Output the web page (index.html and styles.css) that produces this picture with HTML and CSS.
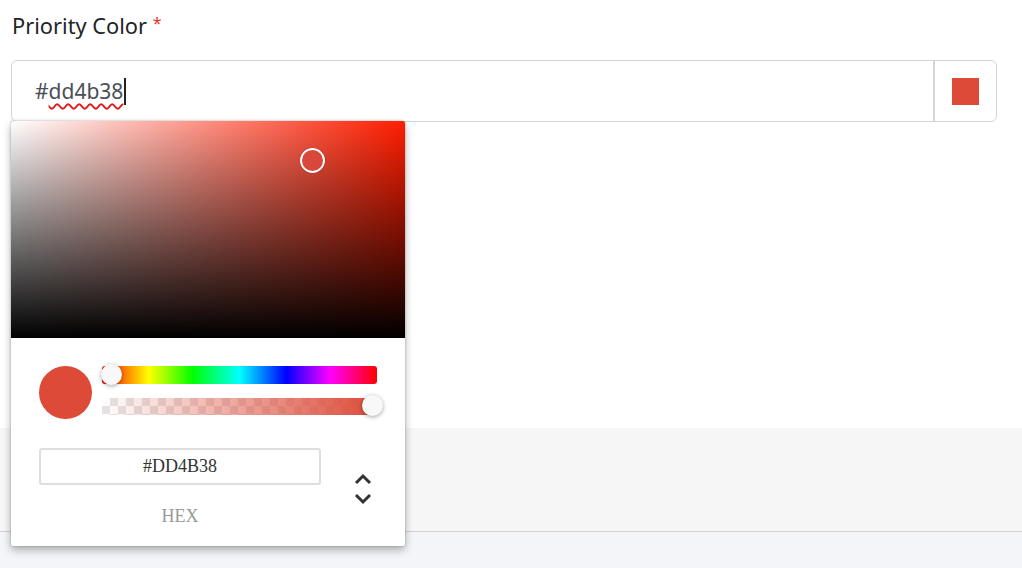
FILE: index.html
```html
<!DOCTYPE html>
<html lang="en">
<head>
  <meta charset="UTF-8" />
  <title>Priority Color</title>
  <link rel="stylesheet" href="styles.css">
</head>
<body>

  <div class="card">
    <div class="card-body">
      <label class="field-label" for="color">Priority Color <span class="req">*</span></label>
      <div class="input-group">
        <div class="color-input"><span class="typed">#<span class="misspelled">dd4b38</span></span><span class="caret"></span></div>
        <div class="addon"><span class="swatch"></span></div>
      </div>
    </div>
    <div class="card-footer"></div>
  </div>

  <div class="picker">
    <div class="saturation">
      <div class="sat-white"></div>
      <div class="sat-black"></div>
      <span class="sat-thumb"></span>
    </div>
    <div class="controls">
      <div class="slider-row">
        <div class="preview"></div>
        <div class="sliders">
          <div class="hue">
            <span class="thumb hue-thumb"></span>
          </div>
          <div class="alpha">
            <div class="alpha-fill"></div>
            <span class="thumb alpha-thumb"></span>
          </div>
        </div>
      </div>
      <div class="field-row">
        <div class="hex-field">
          <div class="hex-box">#DD4B38</div>
          <div class="hex-label">HEX</div>
        </div>
        <div class="toggle">
          <svg width="18" height="34" viewBox="0 0 18 34">
            <path d="M2 11 L9 4 L16 11" fill="none" stroke="#333" stroke-width="3" />
            <path d="M2 23 L9 30 L16 23" fill="none" stroke="#333" stroke-width="3" />
          </svg>
        </div>
      </div>
    </div>
  </div>

</body>
</html>
```

FILE: styles.css
```css
body {
  margin: 0;
  background: #f4f5f9;
  font-family: "Noto Sans", "Open Sans", sans-serif;
}

.card {
  background: #fff;
  border-bottom: 1px solid #cfcfd4;
  box-shadow: 0 2px 6px rgba(0,0,0,0.06);
}

.card-body {
  height: 428px;
  padding: 0 25px 0 11px;
  box-sizing: border-box;
}

.field-label {
  display: block;
  padding: 8px 0 0 1px;
  height: 60px;
  box-sizing: border-box;
  font-size: 21.8px;
  line-height: 30px;
  color: #1f2428;
}

.req {
  color: #e5322d;
  font-size: 16px;
  vertical-align: 5px;
}

.input-group {
  display: flex;
  height: 62px;
  box-sizing: border-box;
  border: 1px solid #d2d5db;
  border-radius: 6px;
}

.color-input {
  flex: 1;
  display: flex;
  align-items: center;
  padding-left: 23px;
  font-size: 21px;
  color: #4a5057;
}

.misspelled {
  text-decoration: underline wavy #e01b1b;
  text-decoration-thickness: 1.5px;
  text-underline-offset: 4px;
}

.caret {
  display: inline-block;
  width: 2px;
  height: 27px;
  background: #222;
  margin-left: 1px;
}

.addon {
  width: 61px;
  border-left: 2px solid #d2d5db;
  display: flex;
  align-items: center;
  justify-content: center;
}

.swatch {
  width: 27px;
  height: 27px;
  background: #dd4b38;
}

.picker {
  position: absolute;
  top: 121px;
  left: 11px;
  width: 394px;
  height: 425px;
  background: #fff;
  box-shadow: 0 0 2px rgba(0,0,0,0.3), 0 4px 8px rgba(0,0,0,0.3);
  border-radius: 2px;
  overflow: hidden;
  z-index: 2;
}

.saturation {
  position: relative;
  height: 217px;
  background: #ff1d00;
}

.sat-white {
  position: absolute;
  inset: 0;
  background: linear-gradient(to right, #fff, rgba(255,255,255,0));
}

.sat-black {
  position: absolute;
  inset: 0;
  background: linear-gradient(to top, #000, rgba(0,0,0,0));
}

.sat-thumb {
  position: absolute;
  left: 289px;
  top: 27px;
  width: 25px;
  height: 25px;
  border: 2px solid #fff;
  border-radius: 50%;
  box-shadow: 0 0 1px rgba(0,0,0,0.5);
  box-sizing: border-box;
  background: #d8473a;
}

.controls {
  padding: 28px 28px 0;
}

.slider-row {
  display: flex;
  gap: 10px;
}

.preview {
  width: 53px;
  height: 53px;
  border-radius: 50%;
  background: #dd4b38;
}

.sliders {
  flex: 1;
  display: flex;
  flex-direction: column;
  gap: 14px;
}

.hue {
  position: relative;
  height: 18px;
  border-radius: 3px;
  background: linear-gradient(to right, #f00 0%, #ff0 17%, #0f0 33%, #0ff 50%, #00f 67%, #f0f 83%, #f00 100%);
}

.alpha {
  position: relative;
  height: 17px;
  background-color: #fff;
  background-image:
    linear-gradient(45deg, #e4e4e4 25%, transparent 25%, transparent 75%, #e4e4e4 75%),
    linear-gradient(45deg, #e4e4e4 25%, transparent 25%, transparent 75%, #e4e4e4 75%);
  background-size: 16px 16px;
  background-position: 0 0, 8px 8px;
}

.alpha-fill {
  position: absolute;
  inset: 0;
  background: linear-gradient(to right, rgba(221,75,56,0), #dd4b38);
}

.thumb {
  position: absolute;
  width: 21px;
  height: 21px;
  border-radius: 50%;
  background: #f8f8f8;
  box-shadow: 0 1px 4px rgba(0,0,0,0.37);
}

.hue-thumb {
  left: -1px;
  top: -2px;
}

.alpha-thumb {
  right: -6px;
  top: -3px;
}

.field-row {
  display: flex;
  margin-top: 29px;
}

.hex-field {
  width: 282px;
  text-align: center;
  font-family: "Liberation Serif", serif;
}

.hex-box {
  height: 37px;
  border: 2px solid #dedede;
  border-radius: 3px;
  box-sizing: border-box;
  font-size: 18px;
  line-height: 33px;
  color: #333;
}

.hex-label {
  margin-top: 21px;
  font-size: 18px;
  color: #999;
}

.toggle {
  margin: 24px 0 0 33px;
}

.card-footer {
  height: 103px;
  background: #f6f6f6;
}
```
